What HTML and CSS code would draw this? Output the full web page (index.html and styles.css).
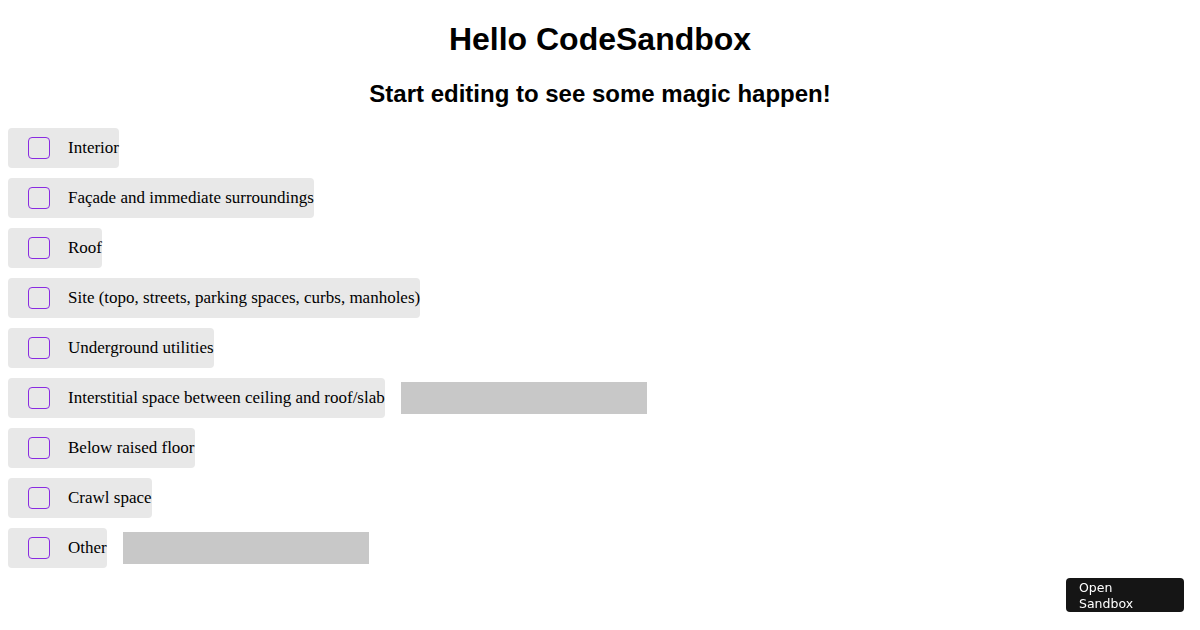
FILE: index.html
```html
<!DOCTYPE html>
<html>
<head>
<meta charset="utf-8">
<link rel="stylesheet" href="styles.css">
</head>
<body>
<div class="app">
  <h1 class="title">Hello CodeSandbox</h1>
  <h2 class="subtitle">Start editing to see some magic happen!</h2>
  <div class="list">
    <div class="row"><label class="item"><input type="checkbox" class="check"><span class="label-text">Interior</span></label></div>
    <div class="row"><label class="item"><input type="checkbox" class="check"><span class="label-text">Façade and immediate surroundings</span></label></div>
    <div class="row"><label class="item"><input type="checkbox" class="check"><span class="label-text">Roof</span></label></div>
    <div class="row"><label class="item"><input type="checkbox" class="check"><span class="label-text">Site (topo, streets, parking spaces, curbs, manholes)</span></label></div>
    <div class="row"><label class="item"><input type="checkbox" class="check"><span class="label-text">Underground utilities</span></label></div>
    <div class="row"><label class="item"><input type="checkbox" class="check"><span class="label-text">Interstitial space between ceiling and roof/slab</span></label><input type="text" class="field"></div>
    <div class="row"><label class="item"><input type="checkbox" class="check"><span class="label-text">Below raised floor</span></label></div>
    <div class="row"><label class="item"><input type="checkbox" class="check"><span class="label-text">Crawl space</span></label></div>
    <div class="row"><label class="item"><input type="checkbox" class="check"><span class="label-text">Other</span></label><input type="text" class="field"></div>
  </div>
</div>
<a class="open-btn"><span class="open-text">Open Sandbox</span></a>
</body>
</html>
```
FILE: styles.css
```css
body {
  margin: 8px;
  font-family: "Liberation Serif", serif;
  background: #fff;
  color: #000;
}
.title {
  font-family: "Liberation Sans", Arial, sans-serif;
  font-size: 32px;
  font-weight: bold;
  text-align: center;
  margin: 13.44px 0 21.44px;
}
.subtitle {
  font-family: "Liberation Sans", Arial, sans-serif;
  font-size: 24px;
  font-weight: bold;
  text-align: center;
  margin: 19.92px 0;
}
.list {
  display: flex;
  flex-direction: column;
  align-items: flex-start;
  gap: 10px;
}
.row {
  display: flex;
  align-items: center;
  gap: 16px;
}
.item {
  display: inline-flex;
  align-items: center;
  height: 40px;
  background: #e8e8e8;
  border-radius: 4px;
  padding-left: 20px;
  gap: 18px;
}
.check {
  appearance: none;
  -webkit-appearance: none;
  margin: 0;
  width: 22px;
  height: 22px;
  box-sizing: border-box;
  border: 1px solid #8a2be2;
  border-radius: 4px;
  background: transparent;
}
.label-text {
  font-family: "Liberation Serif", serif;
  font-size: 17px;
}
.field {
  width: 246px;
  height: 32px;
  box-sizing: border-box;
  border: none;
  background: #c8c8c8;
  margin: 0;
  padding: 0;
}
.open-btn {
  position: fixed;
  right: 16px;
  bottom: 18px;
  width: 118px;
  height: 34px;
  box-sizing: border-box;
  padding: 2px 13px 0;
  background: #151515;
  border-radius: 4px;
  color: #fff;
  font-family: "DejaVu Sans", sans-serif;
  font-size: 12.5px;
  line-height: 16px;
}
.open-text {
  display: block;
  width: 60px;
}
```
